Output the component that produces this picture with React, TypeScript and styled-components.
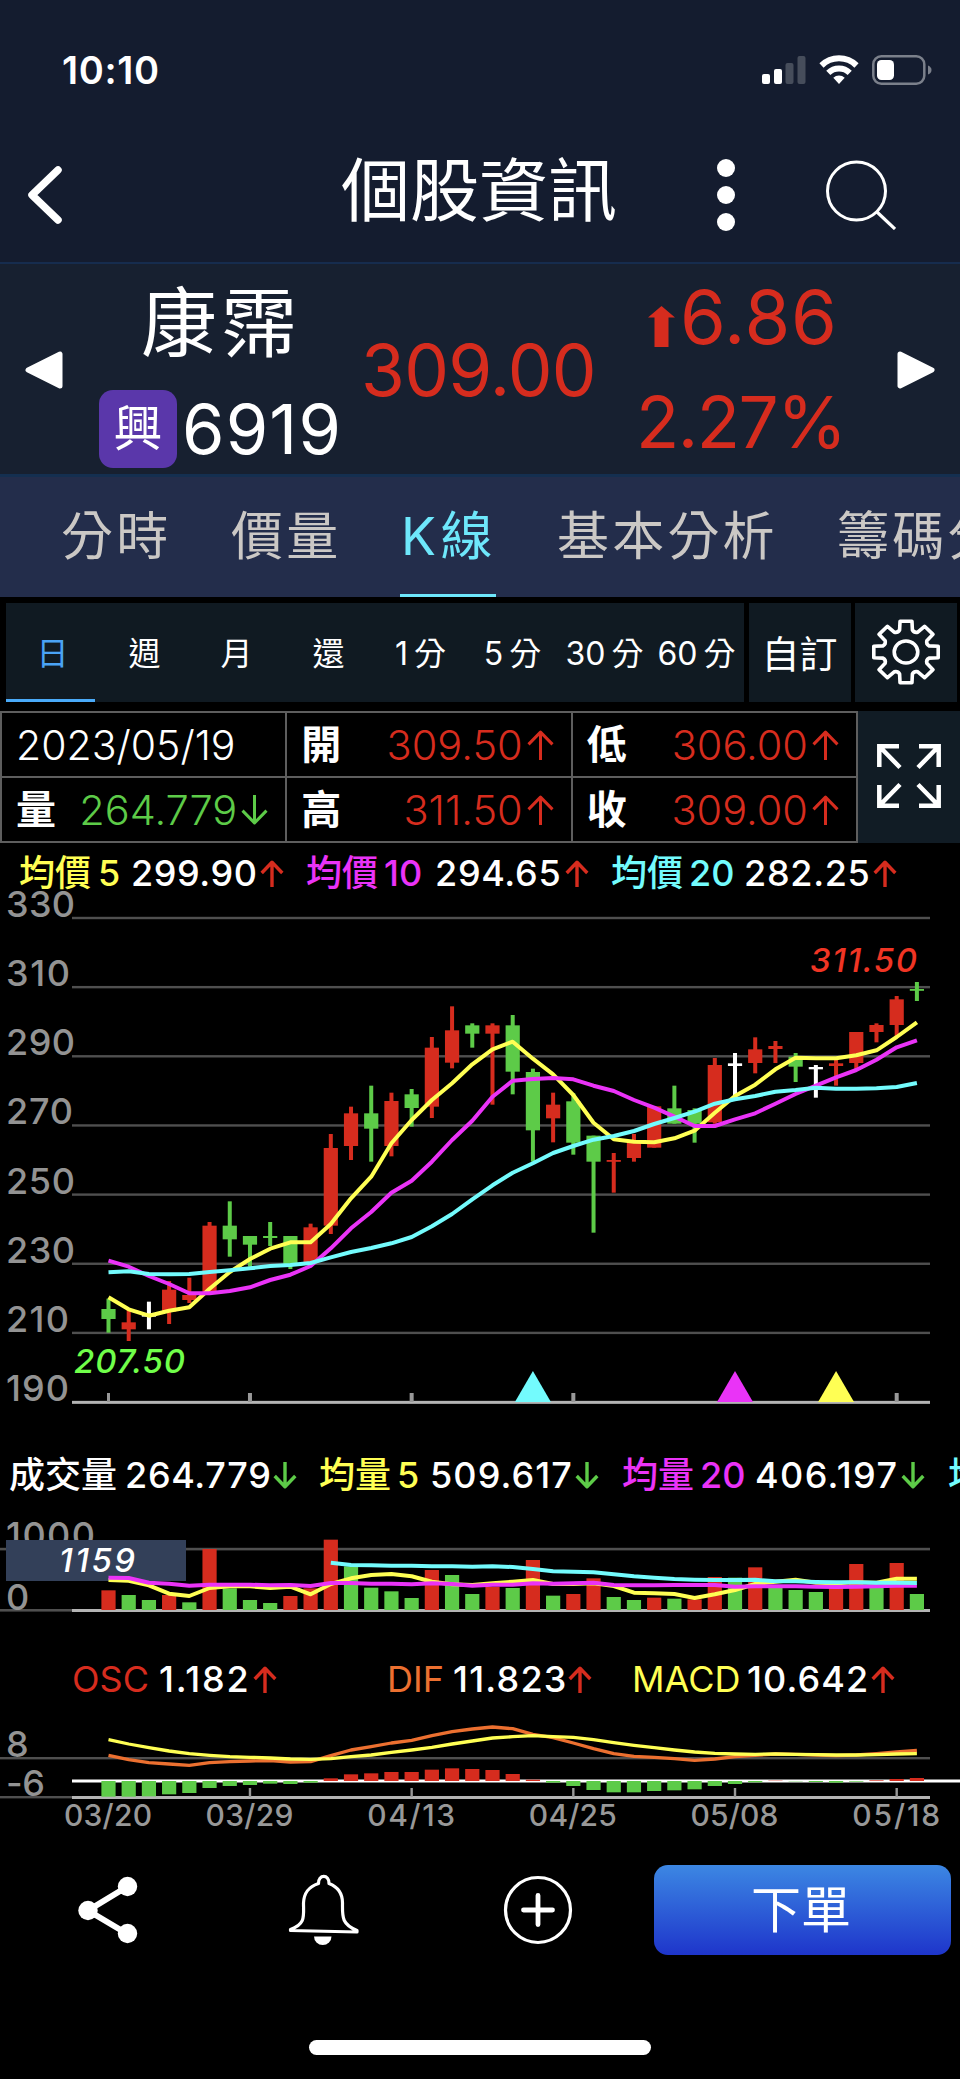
import React from "react";
import styled, { createGlobalStyle } from "styled-components";

const RED = "#d62c1e";
const GREEN = "#5dcb48";
const YELLOW = "#ffff54";
const MAGENTA = "#ea33f7";
const CYAN = "#73fbfd";
const ORANGE = "#ec7030";
const FONT = `Inter, "Noto Sans CJK TC", sans-serif`;

const GlobalStyle = createGlobalStyle`
  * { box-sizing: border-box; }
  body { margin: 0; background: #000; }
`;

const Screen = styled.div`
  width: 960px;
  height: 2079px;
  overflow: hidden;
  display: flex;
  flex-direction: column;
  background: #000;
  color: #fff;
  font-family: ${FONT};
  font-feature-settings: "calt" 0;
`;

/* ---------- text ---------- */

const Text = styled.span<{
  $size: number;
  $weight?: number;
  $color?: string;
  $ls?: number;
  $w?: number;
  $up?: number;
}>`
  display: block;
  flex: none;
  white-space: nowrap;
  font-size: ${(p) => p.$size}px;
  font-weight: ${(p) => p.$weight ?? 400};
  color: ${(p) => p.$color ?? "#fff"};
  letter-spacing: ${(p) => p.$ls ?? 0}px;
  ${(p) => (p.$w ? `width: ${p.$w}px;` : "")}
  ${(p) => (p.$up ? `margin-bottom: ${p.$up}px;` : "")}
`;

/* ---------- header ---------- */

const Header = styled.header`
  flex: none;
  height: 264px;
  background: #141c2f;
  border-bottom: 2px solid #162c4e;
`;

const StatusBar = styled.div`
  height: 126px;
  padding: 13px 28px 0 62px;
  display: flex;
  align-items: center;
  justify-content: space-between;
`;

const NavBar = styled.div`
  height: 136px;
  padding: 2px 0 0 27px;
  display: grid;
  grid-template-columns: 314px 376px 109px 1fr;
  align-items: center;
  svg { display: block; }
`;

/* ---------- quote ---------- */

const Quote = styled.section`
  flex: none;
  height: 213px;
  padding: 0 25px;
  display: grid;
  grid-template-columns: 74px 262px 275px 261px 38px;
  background: #172030;
  border-bottom: 3px solid #142f50;
`;

const QuoteCell = styled.div`
  height: 210px;
  display: flex;
  align-items: center;
  padding-top: 1px;
`;

const Stack = styled.div`
  display: flex;
  flex-direction: column;
`;

const NameRow = styled.div`
  height: 118px;
  margin-bottom: 8px;
  padding-left: 42px;
  display: flex;
  align-items: center;
  line-height: 118px;
`;

const CodeRow = styled.div`
  height: 78px;
  display: flex;
  align-items: center;
  gap: 5px;
`;

const Board = styled.span`
  width: 78px;
  height: 78px;
  border-radius: 14px;
  background: #5a37aa;
  font-size: 49px;
  line-height: 78px;
  text-align: center;
`;

const ChangeRow = styled.div<{ $indent: number }>`
  height: 105px;
  padding-left: ${(p) => p.$indent}px;
  display: flex;
  align-items: center;
  gap: 5px;
  svg { margin-top: 20px; }
`;

/* ---------- tabs ---------- */

const Tabs = styled.nav`
  flex: none;
  height: 120px;
  padding-left: 60px;
  display: flex;
  gap: 60px;
  overflow: hidden;
  background: #232d4b;
`;

const Tab = styled.span<{ $active?: boolean; $w: number }>`
  flex: none;
  width: ${(p) => p.$w}px;
  height: 120px;
  font-size: 52px;
  line-height: 120px;
  letter-spacing: ${(p) => (p.$active ? 4.5 : 3.2)}px;
  white-space: nowrap;
  padding-left: 1px;
  color: ${(p) => (p.$active ? "#6ee7fb" : "#cbc8c5")};
  border-bottom: 3px solid ${(p) => (p.$active ? "#6ee7fb" : "transparent")};
`;

/* ---------- period bar ---------- */

const PeriodBar = styled.div`
  flex: none;
  height: 114px;
  padding: 6px 3px 9px 6px;
  display: grid;
  grid-template-columns: 738px 102px 102px;
  column-gap: 4.5px;
`;

const Periods = styled.div`
  display: flex;
  gap: 3px;
  background: #101a22;
`;

const Period = styled.span<{ $active?: boolean }>`
  width: 89px;
  height: 99px;
  padding-left: 4px;
  font-size: 32px;
  line-height: 101px;
  word-spacing: -3px;
  text-align: center;
  white-space: nowrap;
  color: ${(p) => (p.$active ? "#4aa3f5" : "#fff")};
  border-bottom: 3px solid ${(p) => (p.$active ? "#4aaaf8" : "transparent")};
`;

const BarButton = styled.div`
  display: flex;
  align-items: center;
  justify-content: center;
  padding-bottom: 2px;
  background: #101a22;
  font-size: 38px;
`;

/* ---------- OHLC table ---------- */

const Summary = styled.section`
  flex: none;
  height: 132px;
  display: grid;
  grid-template-columns: 858px 102px;
`;

const OhlcGrid = styled.div`
  display: grid;
  grid-template-columns: repeat(3, 1fr);
  grid-template-rows: 65px 65px;
  border: 1px solid #5e5e5e;
`;

const OhlcCell = styled.div`
  border: 1px solid #5e5e5e;
  padding: 0 17px 0 14px;
  display: flex;
  align-items: center;
  justify-content: space-between;
  line-height: 62px;
`;

const ExpandButton = styled.div`
  display: flex;
  align-items: center;
  justify-content: center;
  padding-bottom: 2px;
  background: #111c25;
`;

const Reading = styled.span`
  display: flex;
  align-items: center;
  gap: 4px;
`;

/* ---------- legends ---------- */

const Legend = styled.div<{ $h: number; $line: number; $left: number }>`
  flex: none;
  height: ${(p) => p.$h}px;
  padding-left: ${(p) => p.$left}px;
  display: flex;
  line-height: ${(p) => p.$line}px;
`;

const ArrowBox = styled.span<{ $w: number; $h: number }>`
  flex: none;
  display: flex;
  align-items: center;
  width: ${(p) => p.$w}px;
  height: ${(p) => p.$h}px;
`;

const Chart = styled.svg`
  display: block;
  flex: none;
  font-family: ${FONT};
`;

/* ---------- footer ---------- */

const Footer = styled.footer`
  flex: none;
  height: 120px;
  padding-left: 78px;
  display: grid;
  grid-template-columns: 210px 214px 152px 297px;
  align-items: center;
  svg { display: block; }
`;

const OrderButton = styled.button`
  height: 90px;
  border: 0;
  padding: 0;
  border-radius: 14px;
  background: linear-gradient(#3c87e3, #1e35cb);
  color: #fff;
  font: 400 50px/90px ${FONT};
  text-indent: -3px;
`;

const HomeArea = styled.div`
  flex: none;
  padding-top: 70px;
  display: flex;
  justify-content: center;
`;

const HomeIndicator = styled.div`
  width: 342px;
  height: 15px;
  border-radius: 8px;
  background: #fff;
`;

/* ---------- icons ---------- */

const Arrow = ({ up, w, h, sw, color }: { up: boolean; w: number; h: number; sw: number; color: string }) => {
  const m = w / 2;
  const k = sw / 2;
  const d = up
    ? `M${m} ${h}V${k + 0.6}M${k} ${m + k * 0.6}L${m} ${k + 0.6}L${w - k} ${m + k * 0.6}`
    : `M${m} 0V${h - k - 0.6}M${k} ${h - m - k * 0.6}L${m} ${h - k - 0.6}L${w - k} ${h - m - k * 0.6}`;
  return (
    <svg width={w} height={h}>
      <path d={d} fill="none" stroke={color} strokeWidth={sw} strokeLinejoin="round" strokeLinecap="butt" />
    </svg>
  );
};

const StatusIcons = () => (
  <svg width="170" height="32" viewBox="762 54 170 32">
    <rect x="762" y="74" width="8" height="10" rx="2" fill="#fff" />
    <rect x="774" y="69" width="8" height="15" rx="2" fill="#fff" />
    <rect x="785.500" y="63" width="8" height="21" rx="2" fill="#464d5b" />
    <rect x="797.500" y="56" width="8" height="28" rx="2" fill="#464d5b" />
    <g fill="none" stroke="#fff" strokeWidth="6">
      <path d="M821.500 65.500 A25 25 0 0 1 856.500 65.500" />
      <path d="M828.300 72.800 A15.500 15.500 0 0 1 849.700 72.800" />
    </g>
    <path d="M839 84 L833.300 77.800 A8.500 8.500 0 0 1 844.700 77.800 Z" fill="#fff" />
    <rect x="873.300" y="56.300" width="51" height="27.500" rx="8" fill="none" stroke="#7b808b" strokeWidth="2.500" />
    <rect x="877" y="60" width="17" height="20" rx="4.500" fill="#fff" />
    <path d="M928 65.500 Q931.500 67 931.500 70 Q931.500 73 928 74.500Z" fill="#7b808b" />
  </svg>
);

const BackIcon = () => (
  <svg width="36" height="60" viewBox="0 0 36 60">
    <path d="M31 5 L5 30 L31 55" fill="none" stroke="#fff" strokeWidth="7.500" strokeLinecap="round" strokeLinejoin="round" />
  </svg>
);

const MoreIcon = () => (
  <svg width="18" height="72" viewBox="0 0 18 72">
    {[9, 36, 63].map((y) => (
      <circle key={y} cx="9" cy={y} r="9" fill="#fff" />
    ))}
  </svg>
);

const SearchIcon = () => (
  <svg width="70" height="70" viewBox="0 0 70 70">
    <circle cx="30.500" cy="31" r="29" fill="none" stroke="#fff" strokeWidth="3" />
    <path d="M51 52 L69 69" stroke="#fff" strokeWidth="3.200" />
  </svg>
);

const Caret = ({ right }: { right?: boolean }) => (
  <svg width="38" height="38" viewBox="0 0 38 38">
    <path
      d="M3 19 L35 3 L35 35 Z"
      fill="#fff"
      stroke="#fff"
      strokeWidth="5"
      strokeLinejoin="round"
      transform={right ? "rotate(180 19 19)" : undefined}
    />
  </svg>
);

const RiseIcon = () => (
  <svg width="27" height="41" viewBox="0 0 27 41">
    <path d="M13.500 0 L27 11.500 H20.500 V41 H6.500 V11.500 H0 Z" fill={RED} />
  </svg>
);

const gearPath = () => {
  const pts: string[] = [];
  const at = (r: number, deg: number) => {
    const a = ((deg - 90) * Math.PI) / 180;
    return `${(36 + r * 1.05 * Math.cos(a)).toFixed(2)} ${(34 + r * Math.sin(a)).toFixed(2)}`;
  };
  for (let k = 0; k < 8; k++) {
    const a = k * 45;
    pts.push(`${k ? "L" : "M"}${at(22.8, a - 15.5)}`);
    pts.push(`L${at(31.2, a - 10.5)}`);
    pts.push(`L${at(31.2, a + 10.5)}`);
    pts.push(`L${at(22.8, a + 15.5)}`);
    pts.push(`Q${at(20.5, a + 22.5)} ${at(22.8, a + 29.5)}`);
  }
  return pts.join("") + "Z";
};

const GearIcon = () => (
  <svg width="72" height="68" viewBox="0 0 72 68">
    <g fill="none" stroke="#fff" strokeWidth="3.600" strokeLinejoin="round">
      <path d={gearPath()} />
      <ellipse cx="36" cy="34" rx="11.800" ry="11" />
    </g>
  </svg>
);

const ExpandIcon = () => (
  <svg width="64" height="64" viewBox="0 0 64 64">
    <g fill="none" stroke="#fff" strokeWidth="4.500">
      <path d="M22 2.300H2.300V23M3 3L23 23.500" />
      <path d="M42 2.300H61.700V23M61 3L41 23.500" />
      <path d="M22 61.700H2.300V41M3 61L23 40.500" />
      <path d="M42 61.700H61.700V41M61 61L41 40.500" />
    </g>
  </svg>
);

const ShareIcon = () => (
  <svg width="60" height="68" viewBox="0 0 60 68">
    <path d="M49.500 10.500 L10 34.500 L49.500 58" fill="none" stroke="#fff" strokeWidth="6" />
    <circle cx="49.500" cy="10.500" r="9.700" fill="#fff" />
    <circle cx="10" cy="34.500" r="9.700" fill="#fff" />
    <circle cx="49.500" cy="57.500" r="9.700" fill="#fff" />
  </svg>
);

const BellIcon = () => (
  <svg width="72" height="72" viewBox="0 0 72 72">
    <path
      d="M30.500 9.500 C30 0 41.500 0 41 9.500 C50 13 54.500 20 54.500 29 C54.500 42 53 50 69 56.500 L69 58 L2.500 56.500 V55.500 C18 50 15.500 42 15.500 29 C16 19 20 13 30.500 9.500 Z"
      fill="none"
      stroke="#fff"
      strokeWidth="3.200"
      strokeLinejoin="round"
    />
    <path d="M26 62.500 H43.500 A8.700 8.500 0 0 1 26 62.500Z" fill="#fff" />
  </svg>
);

const AddIcon = () => (
  <svg width="72" height="72" viewBox="0 0 72 72">
    <circle cx="36" cy="36" r="32.500" fill="none" stroke="#fff" strokeWidth="3.200" />
    <path d="M36 21.500V50.500M21.500 36H50.500" stroke="#fff" strokeWidth="4.800" strokeLinecap="round" />
  </svg>
);

/* ---------- chart data ---------- */

const X0 = 108.5;
const STEP = 20.21;
const xAt = (i: number) => X0 + i * STEP;

type Tone = "r" | "g" | "w";
const TONES: Record<Tone, string> = { r: RED, g: GREEN, w: "#fff" };

// tone, high, body top, body bottom, low
const CANDLES: [Tone, number, number, number, number][] = [
  ["g", 1016, 1047, 1077, 1118],
  ["r", 1050, 1087, 1108, 1143],
  ["w", 1025, 1064, 1070, 1108],
  ["r", 963, 989, 1055, 1092],
  ["r", 953, 1005, 1020, 1029],
  ["r", 786, 797, 1000, 1000],
  ["g", 724, 797, 838, 890],
  ["g", 828, 828, 854, 920],
  ["g", 786, 828, 834, 858],
  ["g", 828, 828, 912, 927],
  ["r", 791, 802, 910, 910],
  ["r", 522, 564, 797, 822],
  ["r", 440, 460, 558, 600],
  ["g", 377, 460, 506, 605],
  ["r", 398, 423, 558, 589],
  ["g", 387, 403, 444, 500],
  ["r", 231, 263, 440, 474],
  ["r", 139, 211, 308, 325],
  ["g", 190, 196, 221, 263],
  ["r", 190, 196, 221, 434],
  ["g", 165, 196, 335, 403],
  ["g", 326, 336, 511, 605],
  ["r", 398, 434, 475, 547],
  ["g", 400, 424, 548, 584],
  ["g", 527, 527, 605, 818],
  ["r", 579, 600, 605, 698],
  ["r", 522, 548, 594, 605],
  ["r", 439, 439, 563, 563],
  ["g", 377, 445, 491, 491],
  ["g", 445, 450, 491, 548],
  ["r", 294, 315, 487, 491],
  ["w", 279, 310, 318, 408],
  ["r", 232, 268, 309, 340],
  ["r", 243, 258, 267, 309],
  ["g", 279, 290, 320, 366],
  ["w", 315, 321, 328, 413],
  ["r", 300, 310, 318, 377],
  ["r", 216, 216, 309, 330],
  ["r", 190, 195, 216, 247],
  ["r", 108, 118, 195, 230],
  ["g", 66, 87, 92, 123],
];

const MA5 = [
  1012, 1048, 1067, 1052, 1042, 986, 936, 897, 866, 847, 847, 792, 715, 650, 550, 480, 420, 370, 313, 268, 245, 296,
  343, 405, 488, 538, 545, 547, 535, 512, 458, 408, 374, 328, 293, 295, 295, 286, 271, 231, 187,
];
const MA10 = [
  902, 920, 948, 972, 1000, 1000, 993, 982, 960, 944, 918, 865, 805, 756, 698, 662, 605, 540, 482, 410, 362, 357, 354,
  358, 377, 393, 420, 443, 470, 498, 498, 478, 460, 431, 402, 377, 352, 330, 299, 262, 241,
];
const MA20 = [
  937, 934, 942, 943, 942, 936, 931, 925, 918, 915, 909, 892, 876, 864, 850, 831, 799, 762, 718, 676, 638, 610, 579,
  558, 539, 528, 513, 492, 474, 455, 431, 418, 408, 395, 390, 383, 386, 386, 385, 381, 369,
];

const VOLUME: [Tone, number][] = [
  ["r", 481], ["g", 495], ["g", 510], ["r", 495], ["g", 517], ["r", 357], ["g", 475], ["g", 510], ["g", 519],
  ["r", 498], ["r", 475], ["r", 329], ["g", 409], ["g", 473], ["g", 484], ["g", 504], ["r", 420], ["g", 435],
  ["g", 492], ["r", 471], ["g", 474], ["r", 390], ["g", 497], ["r", 492], ["r", 445], ["g", 501], ["g", 510],
  ["r", 503], ["g", 506], ["r", 508], ["r", 441], ["g", 443], ["r", 412], ["g", 473], ["g", 480], ["g", 486],
  ["r", 470], ["r", 402], ["g", 470], ["r", 399], ["g", 492],
];
const VMA5 = [
  450, 452, 466, 491, 498, 474, 469, 469, 474, 470, 493, 462, 445, 435, 432, 439, 455, 463, 465, 460, 455, 450, 462,
  462, 460, 468, 488, 490, 492, 504, 493, 480, 462, 455, 449, 458, 460, 457, 458, 446, 446,
];
const VMA20 = [
  443, 444, 458, 461, 467, 464, 464, 464, 466, 465, 468, 459, 459, 461, 461, 463, 460, 462, 467, 464, 464, 460, 461,
  460, 458, 465, 466, 466, 465, 465, 465, 470, 469, 469, 469, 470, 471, 470, 469, 467, 467,
];
const VMA60 = [
  398, 405, 406, 407, 407, 409, 409, 410, 409, 411, 417, 424, 425, 427, 433, 439, 443, 447, 449, 450, 450, 449, 454,
  454, 456, 457, 457, 458, 458, 459,
];

const OSC = [
  -47, -47, -46, -40, -36, -21, -15, -12, -8, -9, -5, 8, 20, 23, 27, 27, 34, 38, 36, 33, 21, 4, -5, -15, -27, -34, -34,
  -30, -28, -25, -15, -9, -4, 1, -1, -3, -5, -2, 2, 6, 9,
];
const DIF = [
  346, 359, 368, 372, 376, 368, 365, 363, 362, 366, 365, 347, 330, 320, 309, 301, 287, 275, 267, 261, 266, 283, 293,
  309, 326, 341, 349, 352, 356, 361, 357, 350, 346, 342, 343, 345, 347, 345, 341, 336, 331,
];
const MACD = [
  299, 312, 323, 333, 341, 346, 350, 352, 354, 357, 358, 356, 350, 345, 337, 330, 322, 312, 303, 294, 290, 287, 290,
  292, 299, 308, 316, 323, 330, 336, 340, 342, 343, 342, 343, 344, 345, 345, 344, 342, 341,
];

const DATES: [number, string][] = [
  [0, "03/20"], [7, "03/29"], [15, "04/13"], [23, "04/25"], [31, "05/08"], [39, "05/18"],
];

const Line = ({ data, base, color, from = 0, width = 4 }: { data: number[]; base: number; color: string; from?: number; width?: number }) => (
  <polyline
    points={data.map((v, i) => `${xAt(i + from).toFixed(1)},${(base + v / 3).toFixed(1)}`).join(" ")}
    fill="none"
    stroke={color}
    strokeWidth={width}
    strokeLinejoin="round"
  />
);

const AxisLabel = ({ y, children, w }: { y: number; children: string; w: number }) => (
  <text x="6" y={y} fontSize="36" fontWeight="500" fill="#939393" textLength={w} lengthAdjust="spacing">
    {children}
  </text>
);

const PRICE_AXIS: [string, number][] = [
  ["330", 69], ["310", 64], ["290", 69], ["270", 67], ["250", 69], ["230", 69], ["210", 63], ["190", 63],
];

const PriceChart = () => (
  <Chart width="960" height="550" viewBox="0 890 960 550">
    {PRICE_AXIS.map(([label, w], i) => {
      const y = 918 + i * 69.15;
      const last = i === PRICE_AXIS.length - 1;
      return (
        <g key={label}>
          <rect x="72" y={y - 1.2} width="858" height={last ? 3 : 2.4} fill={last ? "#b4b4b4" : "#4f4f4f"} />
          <AxisLabel y={y - 1} w={w}>{label}</AxisLabel>
        </g>
      );
    })}
    {DATES.map(([i]) => (
      <rect key={i} x={xAt(i) - (i ? 2 : 1.5)} y="1393" width={i ? 4 : 3} height="9" fill="#989898" />
    ))}
    {CANDLES.map(([tone, high, top, bottom, low], i) => (
      <g key={i} fill={TONES[tone]}>
        <rect x={xAt(i) - 2} y={960 + high / 3} width="4" height={(low - high) / 3} />
        <rect x={xAt(i) - 7.1} y={960 + top / 3} width="14.200" height={Math.max((bottom - top) / 3, 1.8)} />
      </g>
    ))}
    <Line data={MA5} base={960} color={YELLOW} />
    <Line data={MA10} base={960} color={MAGENTA} />
    <Line data={MA20} base={960} color={CYAN} />
    {([[21, CYAN], [31, MAGENTA], [36, YELLOW]] as [number, string][]).map(([i, c]) => (
      <path key={i} d={`M${xAt(i)} 1371 l18 31 h-36z`} fill={c} />
    ))}
    <text x="74" y="1373" fontSize="33" fontWeight="500" fontStyle="italic" fill="#70ff4a" textLength="111">
      207.50
    </text>
    <text x="810" y="972" fontSize="33" fontWeight="500" fontStyle="italic" fill="#f03524" textLength="107">
      311.50
    </text>
  </Chart>
);

const VolumeChart = () => (
  <Chart width="960" height="130" viewBox="0 1510 960 130">
    <rect x="0" y="1547.800" width="930" height="2.600" fill="#4f4f4f" />
    <rect x="0" y="1609" width="72" height="2.600" fill="#4f4f4f" />
    <rect x="72" y="1609" width="858" height="3" fill="#b4b4b4" />
    <AxisLabel y={1548} w={89}>1000</AxisLabel>
    <AxisLabel y={1610} w={22}>0</AxisLabel>
    <rect x="6" y="1540" width="180" height="41" fill="#334059" />
    <text x="59" y="1572" fontSize="33" fontWeight="500" fontStyle="italic" fill="#fff" textLength="76">
      1159
    </text>
    {VOLUME.map(([tone, top], i) => (
      <rect key={i} x={xAt(i) - 7.1} y={1430 + top / 3} width="14.200" height={(540 - top) / 3} fill={TONES[tone]} />
    ))}
    <Line data={VMA5} base={1430} color={YELLOW} />
    <Line data={VMA20} base={1430} color={MAGENTA} />
    <Line data={VMA60} base={1430} color={CYAN} from={11} />
  </Chart>
);

const MacdChart = () => (
  <Chart width="960" height="132" viewBox="0 1718 960 132">
    <rect x="0" y="1757" width="930" height="2.400" fill="#4f4f4f" />
    <rect x="0" y="1796" width="72" height="2.400" fill="#4f4f4f" />
    <rect x="72" y="1796" width="858" height="3" fill="#b4b4b4" />
    <rect x="72" y="1779.500" width="888" height="3" fill="#fff" />
    <AxisLabel y={1757} w={22}>8</AxisLabel>
    <AxisLabel y={1796} w={39}>-6</AxisLabel>
    {DATES.map(([i, label]) => (
      <g key={label} fill="#989898">
        {i > 0 && <rect x={xAt(i) - 1.2} y="1788" width="2.400" height="9" />}
        <text x={xAt(i) - 44.5} y="1826" fontSize="30" fontWeight="500" textLength="88">
          {label}
        </text>
      </g>
    ))}
    {OSC.map((v, i) => (
      <rect
        key={i}
        x={xAt(i) - 7.1}
        y={v > 0 ? 1781 - v / 3 : 1781}
        width="14.200"
        height={Math.abs(v) / 3}
        fill={v > 0 ? RED : GREEN}
      />
    ))}
    <Line data={DIF} base={1640} color={ORANGE} width={3.3} />
    <Line data={MACD} base={1640} color={YELLOW} width={3.3} />
  </Chart>
);

/* ---------- composed pieces ---------- */

const OHLC: { label?: string; value: string; tone?: "up" | "down" }[] = [
  { value: "2023/05/19" },
  { label: "開", value: "309.50", tone: "up" },
  { label: "低", value: "306.00", tone: "up" },
  { label: "量", value: "264.779", tone: "down" },
  { label: "高", value: "311.50", tone: "up" },
  { label: "收", value: "309.00", tone: "up" },
];

interface LegendItem {
  name: string;
  nameW: number;
  param?: string;
  paramW?: number;
  color: string;
  value: string;
  valueW: number;
  ls: number;
  up: boolean;
  arrowW: number;
  light?: boolean;
}

const LegendParts = ({ item, line }: { item: LegendItem; line: number }) => (
  <>
    <Text $size={36} $weight={item.light ? 400 : 500} $color={item.color} $w={item.nameW}>
      {item.name}
    </Text>
    {item.param && (
      <Text $size={36} $weight={500} $color={item.color} $w={item.paramW}>
        {item.param}
      </Text>
    )}
    <Text $size={36} $weight={500} $w={item.valueW} $ls={item.ls}>
      {item.value}
    </Text>
    <ArrowBox $w={item.arrowW} $h={line}>
      <Arrow up={item.up} w={24} h={27} sw={3.4} color={item.up ? RED : GREEN} />
    </ArrowBox>
  </>
);

const PRICE_LEGEND: LegendItem[] = [
  { name: "均價", nameW: 79, param: "5", paramW: 33, color: YELLOW, value: "299.90", valueW: 129, ls: 0.6, up: true, arrowW: 46 },
  { name: "均價", nameW: 78, param: "10", paramW: 51, color: MAGENTA, value: "294.65", valueW: 130, ls: 0.7, up: true, arrowW: 46 },
  { name: "均價", nameW: 78, param: "20", paramW: 55, color: CYAN, value: "282.25", valueW: 129, ls: 0.7, up: true, arrowW: 46 },
];

const VOLUME_LEGEND: LegendItem[] = [
  { name: "成交量", nameW: 116, color: "#fff", value: "264.779", valueW: 148, ls: 0.7, up: false, arrowW: 46 },
  { name: "均量", nameW: 78, param: "5", paramW: 33, color: YELLOW, value: "509.617", valueW: 145, ls: 1.1, up: false, arrowW: 47 },
  { name: "均量", nameW: 78, param: "20", paramW: 55, color: MAGENTA, value: "406.197", valueW: 146, ls: 1.4, up: false, arrowW: 47 },
];

const MACD_LEGEND: LegendItem[] = [
  { name: "OSC", nameW: 87, color: RED, value: "1.182", valueW: 94, ls: 1.8, up: true, arrowW: 134, light: true },
  { name: "DIF", nameW: 66, color: ORANGE, value: "11.823", valueW: 115, ls: 1.2, up: true, arrowW: 64, light: true },
  { name: "MACD", nameW: 115, color: YELLOW, value: "10.642", valueW: 124, ls: 1.1, up: true, arrowW: 40, light: true },
];

export default function App() {
  return (
    <Screen>
      <GlobalStyle />
      <Header>
        <StatusBar>
          <Text $size={38} $weight={600} $ls={0.7}>10:10</Text>
          <StatusIcons />
        </StatusBar>
        <NavBar>
          <BackIcon />
          <Text $size={69} $up={18}>個股資訊</Text>
          <MoreIcon />
          <SearchIcon />
        </NavBar>
      </Header>

      <Quote>
        <QuoteCell><Caret /></QuoteCell>
        <Stack>
          <NameRow><Text $size={76} $ls={4}>康霈</Text></NameRow>
          <CodeRow>
            <Board>興</Board>
            <Text $size={68.5} $ls={1.2}>6919</Text>
          </CodeRow>
        </Stack>
        <QuoteCell><Text $size={71} $color={RED} $ls={-0.7}>309.00</Text></QuoteCell>
        <Stack>
          <ChangeRow $indent={12}>
            <RiseIcon />
            <Text $size={74} $color={RED} $ls={0.7}>6.86</Text>
          </ChangeRow>
          <ChangeRow $indent={0}><Text $size={71} $color={RED} $ls={-1.5}>2.27%</Text></ChangeRow>
        </Stack>
        <QuoteCell><Caret right /></QuoteCell>
      </Quote>

      <Tabs>
        <Tab $w={110}>分時</Tab>
        <Tab $w={110}>價量</Tab>
        <Tab $w={96} $active>K線</Tab>
        <Tab $w={220}>基本分析</Tab>
        <Tab $w={220}>籌碼分析</Tab>
      </Tabs>

      <PeriodBar>
        <Periods>
          {["日", "週", "月", "還", "1 分", "5 分", "30 分", "60 分"].map((p, i) => (
            <Period key={p} $active={i === 0}>{p}</Period>
          ))}
        </Periods>
        <BarButton>自訂</BarButton>
        <BarButton><GearIcon /></BarButton>
      </PeriodBar>

      <Summary>
        <OhlcGrid>
          {OHLC.map((c) => (
            <OhlcCell key={c.label ?? "date"}>
              {c.label && <Text $size={40} $weight={700}>{c.label}</Text>}
              {c.tone ? (
                <Reading>
                  <Text $size={41.5} $weight={350} $color={c.tone === "up" ? RED : GREEN}>{c.value}</Text>
                  <Arrow up={c.tone === "up"} w={27} h={30} sw={3} color={c.tone === "up" ? RED : GREEN} />
                </Reading>
              ) : (
                <Text $size={41} $weight={350}>{c.value}</Text>
              )}
            </OhlcCell>
          ))}
        </OhlcGrid>
        <ExpandButton><ExpandIcon /></ExpandButton>
      </Summary>

      <Legend $h={47} $line={61} $left={19}>
        {PRICE_LEGEND.map((item) => <LegendParts key={item.param} item={item} line={61} />)}
      </Legend>
      <PriceChart />
      <Legend $h={70} $line={70} $left={9}>
        {VOLUME_LEGEND.map((item) => <LegendParts key={item.value} item={item} line={70} />)}
        <Text $size={36} $weight={500} $color={CYAN}>均量</Text>
      </Legend>
      <VolumeChart />
      <Legend $h={78} $line={78} $left={72}>
        {MACD_LEGEND.map((item) => <LegendParts key={item.name} item={item} line={78} />)}
      </Legend>
      <MacdChart />

      <Footer>
        <ShareIcon />
        <BellIcon />
        <AddIcon />
        <OrderButton>下單</OrderButton>
      </Footer>
      <HomeArea><HomeIndicator /></HomeArea>
    </Screen>
  );
}
